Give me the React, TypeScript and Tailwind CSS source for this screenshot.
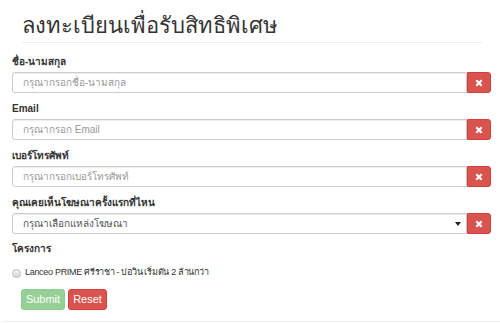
import React from "react";

const XIcon = () => (
  <svg width="8" height="8" viewBox="0 0 8 8">
    <path d="M1.3 1.3 L6.7 6.7 M6.7 1.3 L1.3 6.7" stroke="white" strokeWidth="2.2" strokeLinecap="butt" />
  </svg>
);

const DelBtn = () => (
  <div className="w-[24px] h-[21px] bg-[#d9534f] border border-[#d43f3a] rounded-r-[3px] flex items-center justify-center shrink-0">
    <XIcon />
  </div>
);

const Group = ({ label, placeholder, select }: { label: string; placeholder: string; select?: boolean }) => (
  <div className="mb-[8px]">
    <div className="h-[16px] leading-[16px] text-[10px] font-bold text-[#333] mb-[2px]">{label}</div>
    <div className="flex h-[21px]">
      <div className="flex-1 h-[21px] border border-[#ccc] rounded-l-[3px] shadow-[inset_0_1px_1px_rgba(0,0,0,0.075)] flex items-center pl-[10px] pr-[4px] bg-white">
        <span className={"text-[10px] flex-1 " + (select ? "text-[#555]" : "text-[#999]")}>{placeholder}</span>
        {select && (
          <svg width="6" height="4" viewBox="0 0 6 4" className="mr-[1px]">
            <path d="M0 0 L6 0 L3 4 Z" fill="#222" />
          </svg>
        )}
      </div>
      <DelBtn />
    </div>
  </div>
);

export default function App() {
  return (
    <div className="w-[500px] h-[324px] bg-white overflow-hidden relative" style={{ fontFamily: '"Liberation Sans", Tahoma, "Noto Sans", sans-serif' }}>
      <div className="pl-[22px] pr-[18px]">
        <h1 className="text-[22px] leading-[32px] text-[#333] font-normal pt-[10px] pb-[0px] border-b border-[#eee]">
          ลงทะเบียนเพื่อรับสิทธิพิเศษ
        </h1>
      </div>
      <div className="pl-[12px] pr-[9px] pt-[11px]">
        <Group label="ชื่อ-นามสกุล" placeholder="กรุณากรอกชื่อ-นามสกุล" />
        <Group label="Email" placeholder="กรุณากรอก Email" />
        <Group label="เบอร์โทรศัพท์" placeholder="กรุณากรอกเบอร์โทรศัพท์" />
        <Group label="คุณเคยเห็นโฆษณาครั้งแรกที่ไหน" placeholder="กรุณาเลือกแหล่งโฆษณา" select />
        <div className="h-[16px] leading-[16px] text-[10px] font-bold text-[#333] -mt-[1px]">โครงการ</div>
        <div className="flex items-center h-[16px] mt-[8px]">
          <div className="w-[9px] h-[9px] rounded-full border border-[#bbb] bg-gradient-to-b from-[#f4f4f4] to-[#d8d8d8]" />
          <span className="text-[9px] tracking-[-0.3px] text-[#333] ml-[4px]">Lanceo PRIME ศรีราชา - บ่อวิน เริ่มต้น 2 ล้านกว่า</span>
        </div>
        <div className="flex gap-[3px] mt-[8px] ml-[9px]">
          <div className="w-[44px] h-[21px] rounded-[3px] bg-[#97d097] border border-[#8ecb8e] text-white text-[11px] flex items-center justify-center">Submit</div>
          <div className="w-[39px] h-[21px] rounded-[3px] bg-[#d9534f] border border-[#d43f3a] text-white text-[11px] flex items-center justify-center">Reset</div>
        </div>
      </div>
      <div className="absolute left-[3px] right-0 top-[321px] border-t border-[#eee]" />
    </div>
  );
}
